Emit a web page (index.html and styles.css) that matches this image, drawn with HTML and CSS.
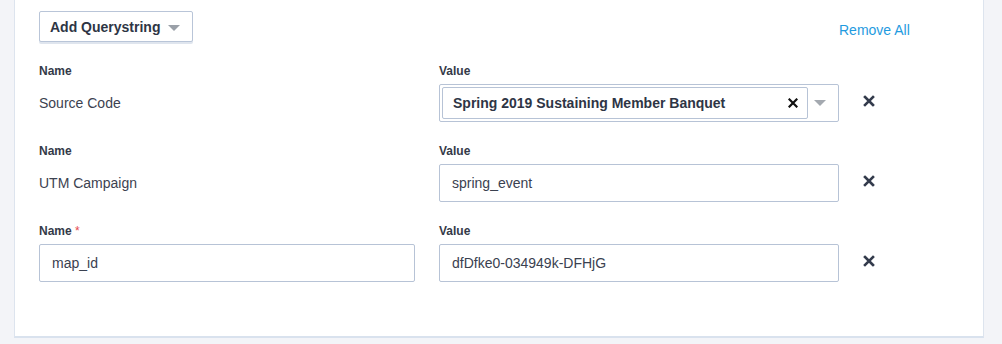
FILE: index.html
```html
<!DOCTYPE html>
<html>
<head>
<meta charset="utf-8">
<link rel="stylesheet" href="styles.css">
</head>
<body>
<div class="card">
  <div class="toolbar">
    <button class="add-btn">Add Querystring <span class="caret"></span></button>
    <a class="remove-all">Remove All</a>
  </div>

  <div class="row">
    <div class="label">Name</div>
    <div class="label">Value</div>
    <div></div>
    <div class="static">Source Code</div>
    <div class="select">
      <div class="select-inner">
        <span class="select-text">Spring 2019 Sustaining Member Banquet</span>
        <svg class="clear" width="10" height="10" viewBox="0 0 10 10"><path d="M1.5 1.5L8.5 8.5M8.5 1.5L1.5 8.5" stroke="#111" stroke-width="2.2" stroke-linecap="square"/></svg>
      </div>
      <span class="select-caret"></span>
    </div>
    <svg class="remove" width="12" height="12" viewBox="0 0 12 12"><path d="M2 2L10 10M10 2L2 10" stroke="#333b4c" stroke-width="2.6" stroke-linecap="square"/></svg>
  </div>

  <div class="row">
    <div class="label">Name</div>
    <div class="label">Value</div>
    <div></div>
    <div class="static">UTM Campaign</div>
    <div class="input">spring_event</div>
    <svg class="remove" width="12" height="12" viewBox="0 0 12 12"><path d="M2 2L10 10M10 2L2 10" stroke="#333b4c" stroke-width="2.6" stroke-linecap="square"/></svg>
  </div>

  <div class="row">
    <div class="label">Name <span class="req">*</span></div>
    <div class="label">Value</div>
    <div></div>
    <div class="input">map_id</div>
    <div class="input">dfDfke0-034949k-DFHjG</div>
    <svg class="remove" width="12" height="12" viewBox="0 0 12 12"><path d="M2 2L10 10M10 2L2 10" stroke="#333b4c" stroke-width="2.6" stroke-linecap="square"/></svg>
  </div>
</div>
</body>
</html>
```

FILE: styles.css
```css
html, body {
  margin: 0;
  padding: 0;
}
body {
  background: #f3f4f8;
  font-family: "Liberation Sans", Arial, sans-serif;
  color: #343a46;
  width: 1002px;
  height: 344px;
  overflow: hidden;
}
.card {
  margin-left: 14px;
  width: 970px;
  background: #fff;
  border: 1px solid #dde4ee;
  border-top: none;
  border-bottom: 2px solid #d9e2ee;
  padding: 11px 0 52px 24px;
  box-sizing: border-box;
  height: 338px;
}
.toolbar {
  display: flex;
  align-items: flex-start;
  height: 52px;
}
.add-btn {
  height: 31px;
  width: 154px;
  box-sizing: border-box;
  border: 1px solid #b9c5d8;
  border-radius: 2px;
  background: #fff;
  box-shadow: 0 2px 0 #dfe5ee;
  font-family: "Liberation Sans", Arial, sans-serif;
  font-weight: bold;
  font-size: 14px;
  color: #2e3545;
  padding: 0 0 0 10px;
  display: flex;
  align-items: center;
  gap: 8px;
  text-align: left;
}
.caret {
  width: 0;
  height: 0;
  border-left: 6px solid transparent;
  border-right: 6px solid transparent;
  border-top: 6px solid #9aa0a8;
  margin-top: 2px;
}
.remove-all {
  margin-left: 646px;
  margin-top: 11px;
  font-size: 14px;
  color: #1f9be0;
  line-height: 16px;
}
.row {
  display: grid;
  grid-template-columns: 376px 400px 60px;
  grid-template-rows: 16px 38px;
  column-gap: 24px;
  row-gap: 5px;
  margin-bottom: 21px;
}
.label {
  font-size: 12px;
  font-weight: bold;
  line-height: 16px;
  color: #343a48;
}
.req {
  color: #e5484d;
  font-weight: normal;
}
.static {
  font-size: 14px;
  line-height: 38px;
  color: #3c4250;
}
.input {
  border: 1px solid #b7c3d6;
  border-radius: 2px;
  box-sizing: border-box;
  height: 38px;
  line-height: 36px;
  padding: 0 12px;
  font-size: 14px;
  color: #3a4150;
}
.select {
  border: 1px solid #b7c3d6;
  border-radius: 2px;
  box-sizing: border-box;
  height: 38px;
  padding: 2px;
  display: flex;
  align-items: stretch;
}
.select-inner {
  width: 366px;
  box-sizing: border-box;
  border: 1px solid #b7c3d6;
  border-radius: 2px;
  display: flex;
  align-items: center;
  padding: 0 9px 0 10px;
  justify-content: space-between;
}
.select-text {
  font-size: 14px;
  font-weight: bold;
  color: #2e3545;
}
.select-caret {
  width: 0;
  height: 0;
  border-left: 6px solid transparent;
  border-right: 6px solid transparent;
  border-top: 6px solid #a4a9b0;
  align-self: center;
  margin-left: 6px;
}
.remove {
  align-self: center;
  margin-left: 0;
  margin-top: -4px;
}
```
